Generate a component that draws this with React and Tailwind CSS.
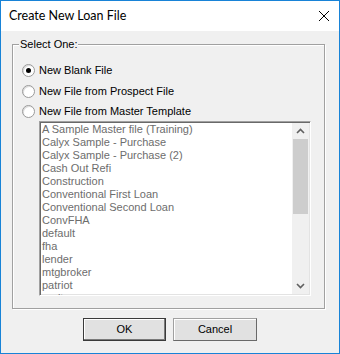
import React from "react";

const items = [
  "A Sample Master file (Training)",
  "Calyx Sample - Purchase",
  "Calyx Sample - Purchase (2)",
  "Cash Out Refi",
  "Construction",
  "Conventional First Loan",
  "Conventional Second Loan",
  "ConvFHA",
  "default",
  "fha",
  "lender",
  "mtgbroker",
  "patriot",
  "realtor",
];

function Radio({ checked, label }) {
  return (
    <div className="flex items-center">
      <span className="w-[13px] h-[13px] rounded-full border border-[#9a9a9a] bg-white flex items-center justify-center shadow-[inset_1px_1px_0_#dcdcdc]">
        {checked && <span className="w-[5px] h-[5px] rounded-full bg-black" />}
      </span>
      <span className="ml-[4px]">{label}</span>
    </div>
  );
}

function Chevron({ up }) {
  return (
    <svg width="9" height="6" viewBox="0 0 9 6" className="block">
      <path
        d={up ? "M1 5 L4.5 1.5 L8 5" : "M1 1 L4.5 4.5 L8 1"}
        fill="none"
        stroke="#606060"
        strokeWidth="1.6"
      />
    </svg>
  );
}

export default function App() {
  return (
    <div
      className="w-[340px] h-[354px] border border-[#1883d7] bg-[#f0f0f0] flex flex-col text-[11px] text-black"
      style={{ fontFamily: '"Liberation Sans", Arial, sans-serif' }}
    >
      <div className="h-[30px] bg-white flex items-center justify-between pl-[8px] pr-[10px] shrink-0">
        <span className="text-[12.5px]" style={{ fontFamily: 'Lato, "Open Sans", sans-serif' }}>
          Create New Loan File
        </span>
        <svg width="10" height="10" viewBox="0 0 10 10" className="block">
          <path d="M0 0 L10 10 M10 0 L0 10" stroke="#000" strokeWidth="1" />
        </svg>
      </div>

      <div className="relative mt-[13px] ml-[11px] w-[313px] h-[265px] border border-[#a0a0a0] shadow-[inset_1px_1px_0_#fff,1px_1px_0_#fff]">
        <span className="absolute left-[6px] top-[-8px] px-[1px] bg-[#f0f0f0] leading-[14px]">Select One:</span>
        <div className="flex flex-col pl-[9px] pt-[14px]">
          <div className="h-[22px] flex items-center">
            <Radio checked label="New Blank File" />
          </div>
          <div className="h-[21px] flex items-center">
            <Radio label="New File from Prospect File" />
          </div>
          <div className="h-[19px] flex items-center">
            <Radio label="New File from Master Template" />
          </div>
        </div>
        <div className="ml-[26px] w-[272px] h-[175px] border border-t-[#a0a0a0] border-l-[#a0a0a0] border-r-white border-b-white shadow-[inset_1px_1px_0_#696969,inset_-1px_-1px_0_#e3e3e3] bg-white flex overflow-hidden">
          <div className="flex-1 overflow-hidden pt-[1px] pl-[2px] text-[#6d6d6d]">
            {items.map((it) => (
              <div key={it} className="h-[13px] leading-[13px] whitespace-nowrap">
                {it}
              </div>
            ))}
          </div>
          <div className="w-[17px] my-[1px] mr-[1px] bg-[#f0f0f0] flex flex-col">
            <div className="h-[16px] flex items-center justify-center">
              <Chevron up />
            </div>
            <div className="flex-1 flex flex-col">
              <div className="h-[75px] mx-[1px] bg-[#cdcdcd]" />
            </div>
            <div className="h-[16px] flex items-center justify-center">
              <Chevron />
            </div>
          </div>
        </div>
      </div>

      <div className="flex justify-center gap-[7px] mt-[9px]">
        <button className="w-[83px] h-[23px] bg-[#e1e1e1] border border-[#3a3a3a] shadow-[inset_-1px_-1px_0_#7a7a7a,inset_1px_1px_0_#fff] text-[11px] text-black flex items-center justify-center">
          OK
        </button>
        <button className="w-[84px] h-[23px] bg-[#e1e1e1] border border-[#a0a0a0] border-r-[#696969] border-b-[#696969] shadow-[inset_1px_1px_0_#fff] text-[11px] text-black flex items-center justify-center">
          Cancel
        </button>
      </div>
    </div>
  );
}
